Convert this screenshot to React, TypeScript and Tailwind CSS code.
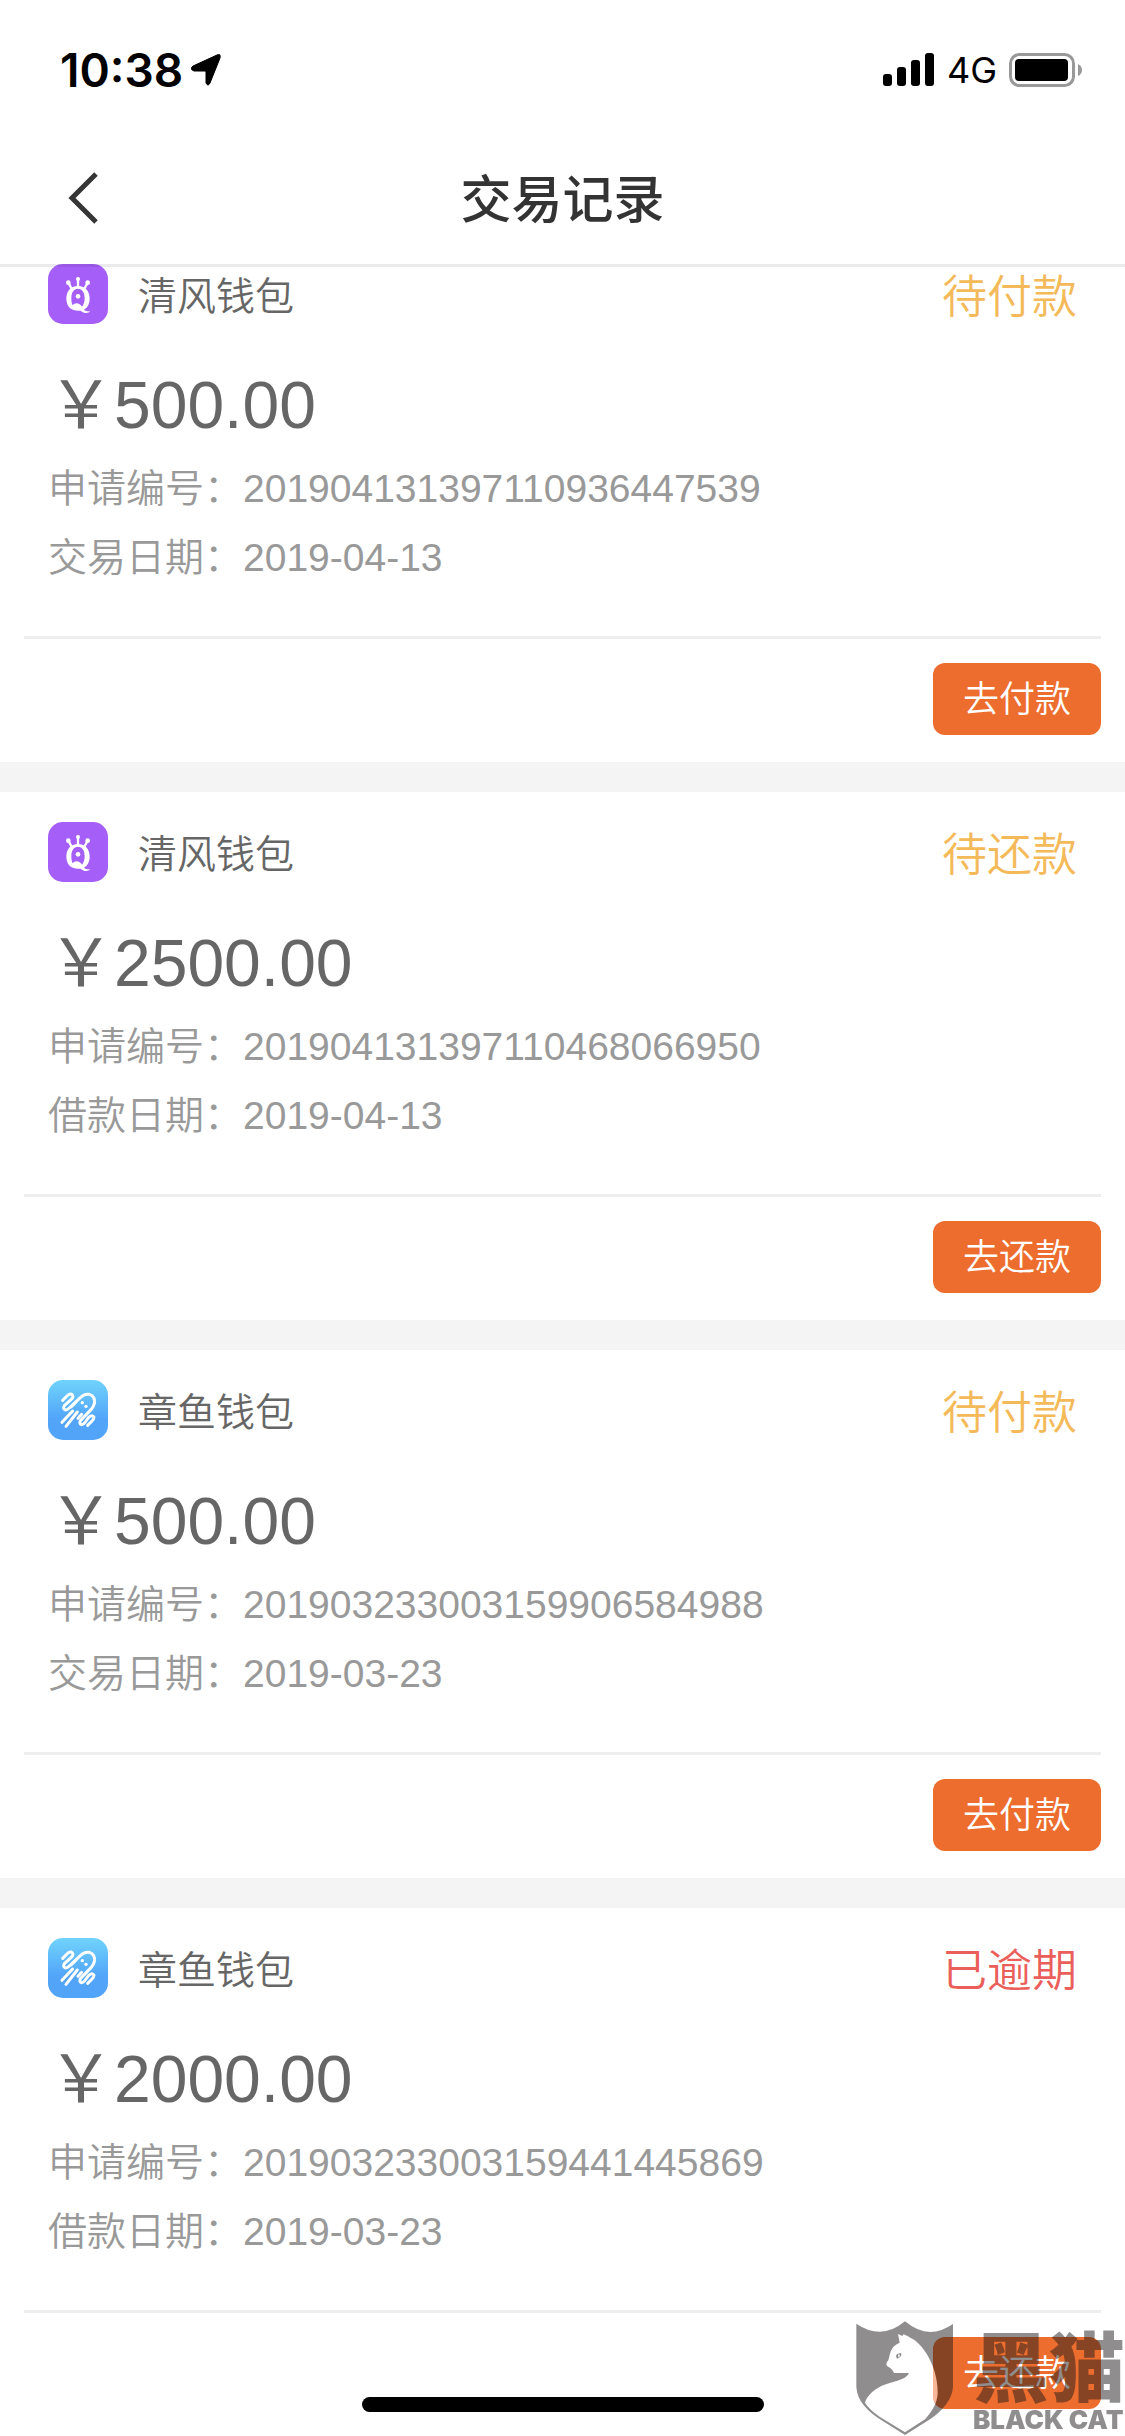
import React from 'react';

type Brand = 'qingfeng' | 'zhangyu';

interface RecordItem {
    id: string;
    brand: Brand;
    name: string;
    status: string;
    overdue?: boolean;
    amount: string;
    dateLabel: string;
    date: string;
    action: string;
}

const RECORDS: RecordItem[] = [
    {
        id: '201904131397110936447539',
        brand: 'qingfeng',
        name: '清风钱包',
        status: '待付款',
        amount: '500.00',
        dateLabel: '交易日期',
        date: '2019-04-13',
        action: '去付款',
    },
    {
        id: '201904131397110468066950',
        brand: 'qingfeng',
        name: '清风钱包',
        status: '待还款',
        amount: '2500.00',
        dateLabel: '借款日期',
        date: '2019-04-13',
        action: '去还款',
    },
    {
        id: '201903233003159906584988',
        brand: 'zhangyu',
        name: '章鱼钱包',
        status: '待付款',
        amount: '500.00',
        dateLabel: '交易日期',
        date: '2019-03-23',
        action: '去付款',
    },
    {
        id: '201903233003159441445869',
        brand: 'zhangyu',
        name: '章鱼钱包',
        status: '已逾期',
        overdue: true,
        amount: '2000.00',
        dateLabel: '借款日期',
        date: '2019-03-23',
        action: '去还款',
    },
];

const QingfengIcon = () => (
    <svg viewBox="0 0 180 180" className="size-15 shrink-0" aria-hidden="true">
        <rect width="180" height="180" rx="45" fill="#a55ff8" />
        <path
            fill="#fff"
            fillRule="evenodd"
            d="M90 66C112 66 125 82 125 103C125 121 118 132 108 137C114 142 121 143 126 141C124 148 108 150 98 140C66 142 55 126 55 103C55 82 68 66 90 66ZM90 74C77 74 70 86 70 103C70 112 71 119 74 124C80 114 96 116 102 128C107 122 110 114 110 103C110 86 103 74 90 74Z"
        />
        <path d="M61 56L73 78M90 44V70M119 56L107 78" stroke="#fff" strokeWidth="7" strokeLinecap="round" />
        <g fill="#fff">
            <circle cx="61" cy="56" r="7" />
            <circle cx="90" cy="45" r="6" />
            <circle cx="119" cy="56" r="7" />
            <circle cx="90" cy="97" r="7" />
        </g>
    </svg>
);

const ZhangyuIcon = () => (
    <svg viewBox="0 0 180 180" className="size-15 shrink-0" aria-hidden="true">
        <defs>
            <linearGradient id="sea" x1="0" y1="0" x2="0" y2="1">
                <stop offset="0" stopColor="#70d3fb" />
                <stop offset="0.65" stopColor="#52a4f9" />
                <stop offset="1" stopColor="#52a4f9" />
            </linearGradient>
        </defs>
        <rect width="180" height="180" rx="45" fill="url(#sea)" />
        <g fill="none" stroke="#fff" strokeWidth="9" strokeLinecap="round" strokeLinejoin="round">
            <path d="M44 61L60 45Q72 37 75 49Q75 54 69 59L49 77Q43 87 53 90Q58 90 64 84L97 53Q109 40 124 43Q143 49 139 71Q137 80 129 89L98 121Q92 132 101 134Q107 134 112 126L122 112Q134 102 138 112Q138 117 132 123L119 136" />
            <path d="M84 66L70 80M74 93L42 127M88 96L54 139M101 103L90 115" />
        </g>
        <circle cx="103" cy="68" r="5" fill="#fff" />
        <circle cx="114" cy="79" r="5" fill="#fff" />
    </svg>
);

const StatusBar = () => (
    <div className="flex h-33 items-center justify-between pt-2 pr-[42px] pl-15 text-black">
        <div className="flex items-center gap-2">
            <span className="font-['Inter',sans-serif] text-[46px] leading-none font-semibold">10:38</span>
            <svg viewBox="0 0 30 32" className="h-8 w-[30px]" aria-hidden="true">
                <path
                    d="M2 12L26 1Q30 -1 29 4L19 29Q17 33 15 29V18Q15 17 14 17L3 17Q-2 15 2 12Z"
                    fill="currentColor"
                    stroke="currentColor"
                />
            </svg>
        </div>
        <div className="flex items-center gap-3">
            <svg viewBox="0 0 52 34" className="h-[34px] w-13" aria-hidden="true">
                <rect x="0" y="21" width="9" height="12" rx="3" />
                <rect x="14" y="14" width="9" height="19" rx="3" />
                <rect x="28" y="7" width="9" height="26" rx="3" />
                <rect x="42" y="0" width="9" height="33" rx="3" />
            </svg>
            <span className="font-['Inter',sans-serif] text-[36px] leading-none">4G</span>
            <svg viewBox="0 0 74 34" className="h-[34px] w-[74px]" aria-hidden="true">
                <rect x="1.5" y="1.5" width="63" height="31" rx="9" fill="none" stroke="#999" strokeWidth="3" />
                <rect x="6" y="6" width="53" height="22" rx="4" />
                <path d="M69 11Q73 13 73 17T69 23Z" fill="#999" />
            </svg>
        </div>
    </div>
);

const RecordCard = ({ record }: { record: RecordItem }) => (
    <li className="bg-white px-6 pt-[30px] pb-[27px]">
        <div className="flex items-start px-6">
            {record.brand === 'qingfeng' ? <QingfengIcon /> : <ZhangyuIcon />}
            <h2 className="ml-[30px] flex-1 text-[39px] leading-[66px] font-[350] text-[#666]">{record.name}</h2>
            <span
                className={`text-[45px] leading-[68px] font-[350] ${
                    record.overdue ? 'text-[#eb5f5b]' : 'text-[#f4ba59]'
                }`}
            >
                {record.status}
            </span>
        </div>
        <p className="mt-7 px-6 pb-1 text-[66px] leading-[90px] text-[#666]">￥{record.amount}</p>
        <dl className="px-6 pb-11 text-[39px] leading-[69px] font-[350] text-[#999]">
            <div className="flex">
                <dt>申请编号：</dt>
                <dd>{record.id}</dd>
            </div>
            <div className="flex">
                <dt>{record.dateLabel}：</dt>
                <dd>{record.date}</dd>
            </div>
        </dl>
        <div className="flex justify-end border-t-3 border-[#eee] pt-6">
            <button
                type="button"
                className="h-18 w-[168px] rounded-xl bg-[#ed6d2e] pt-0.5 text-[36px] leading-none font-[350] text-white"
            >
                {record.action}
            </button>
        </div>
    </li>
);

const Watermark = () => (
    <div className="pointer-events-none fixed right-0 bottom-0 flex items-end opacity-50">
        <svg viewBox="90 90 300 348" className="h-29 w-25" aria-hidden="true">
            <path
                d="M94 101Q170 153 240 94Q310 153 384 102V290C382 330 350 364 315 388L240 435L165 388C130 364 96 334 94 290Z"
                fill="#201c1c"
            />
            <path
                d="M219 132L232 138L236 133Q248 138 267 149C310 180 340 250 338 310C337 340 320 366 300 388L240 427L165 381Q132 358 120 338C124 322 140 303 165 290C195 274 240 274 252 249H207Q202 236 186 228Q181 221 190 211C196 192 194 170 224 158Z"
                fill="#fff"
            />
            <path d="M213 199Q215 188 229 190Q231 202 216 206Z" fill="#201c1c" />
            <path d="M222 189Q217 197 222 204Q226 197 222 189Z" fill="#fff" />
        </svg>
        <div className="ml-[18px] text-[#201c1c]">
            <p className="text-[76px] leading-[72px] font-black">黑猫</p>
            <p className="pb-0.5 font-['Inter',sans-serif] text-[26px] leading-7 font-black">BLACK CAT</p>
        </div>
    </div>
);

export default function App() {
    return (
        <div className="min-h-screen bg-[#f4f4f4] font-['Liberation_Sans','Noto_Sans_CJK_SC',sans-serif]">
            <header className="relative z-10 border-b-3 border-black/8 bg-white bg-clip-padding">
                <StatusBar />
                <div className="grid h-33 grid-cols-[1fr_auto_1fr] items-center">
                    <button type="button" aria-label="返回" className="ml-[66px] w-9">
                        <svg viewBox="0 0 36 54" className="h-[54px] w-9" aria-hidden="true">
                            <path d="M30 3L6 27L30 51" fill="none" stroke="#363636" strokeWidth="5" />
                        </svg>
                    </button>
                    <h1 className="pt-1 text-[51px] leading-none font-medium text-[#333]">交易记录</h1>
                </div>
            </header>

            {/* Scrolled list: the first card slides under the header */}
            <ul className="-mt-[33px] flex flex-col gap-[30px]">
                {RECORDS.map((record) => (
                    <RecordCard key={record.id} record={record} />
                ))}
            </ul>

            <div className="fixed bottom-6 left-1/2 h-[15px] w-[402px] -translate-x-1/2 rounded-full bg-black" />
            <Watermark />
        </div>
    );
}
